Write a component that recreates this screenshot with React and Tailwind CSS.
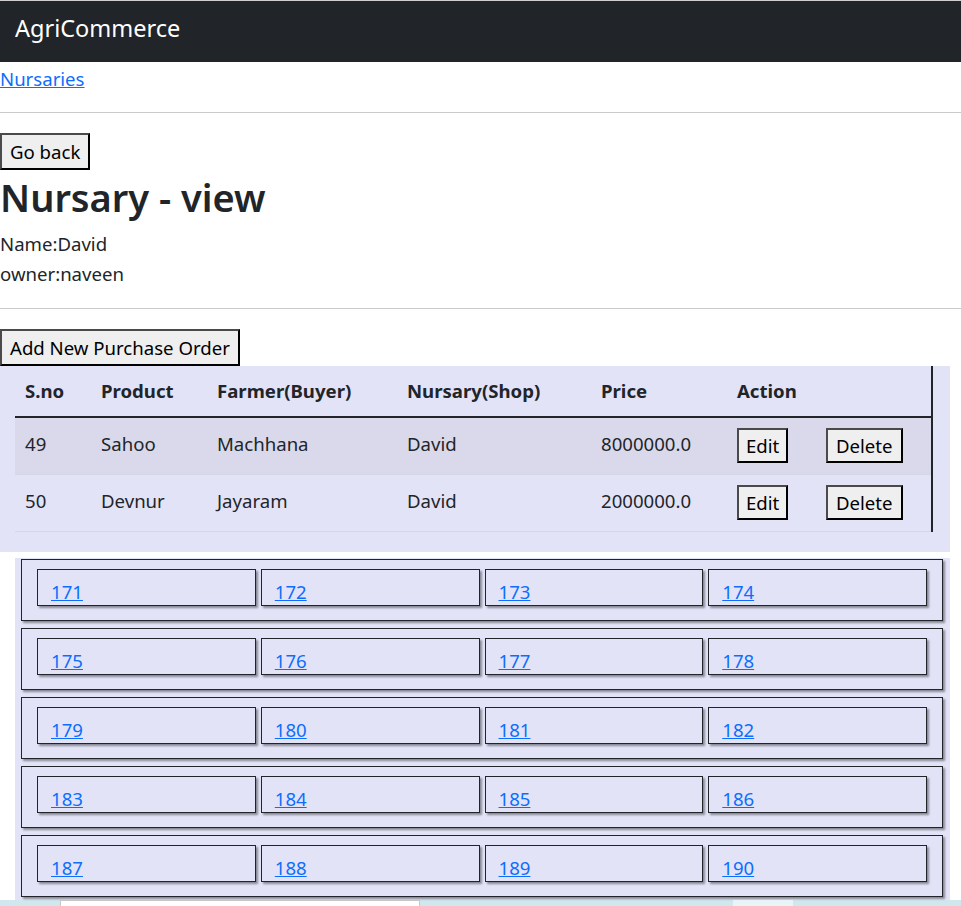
const orders = [
  { sno: 49, product: 'Sahoo', farmer: 'Machhana', nursary: 'David', price: '8000000.0' },
  { sno: 50, product: 'Devnur', farmer: 'Jayaram', nursary: 'David', price: '2000000.0' },
];

const pageRows = [
  [171, 172, 173, 174],
  [175, 176, 177, 178],
  [179, 180, 181, 182],
  [183, 184, 185, 186],
  [187, 188, 189, 190],
];

const btn =
  'bg-[#efefef] border-2 border-solid border-[#4a4a4a] border-r-black border-b-black text-black leading-none';

export default function App() {
  return (
    <div className="min-h-[906px] bg-white text-[#212529] text-[18.6px] font-['Noto_Sans',sans-serif]">
      {/* Navbar */}
      <nav className="h-[62px] bg-[#212529] border-t border-[#cfcfcf] flex items-center pl-[15px] pb-[6px]">
        <span className="text-white text-[23.5px]">AgriCommerce</span>
      </nav>

      <a href="#" className="block mt-[2px] w-fit text-[#0d6efd] underline leading-[29px]">
        Nursaries
      </a>
      <hr className="mt-[19px] border-0 border-t border-[#c9cacb]" />

      <button className={`${btn} mt-[20px] h-[37px] px-[8px] pt-[1px]`}>Go back</button>
      <h1 className="text-[38px] font-semibold leading-[48px] mt-[3px]">Nursary - view</h1>
      <div className="mt-[8px] leading-[30px]">
        <p>Name:David</p>
        <p>owner:naveen</p>
      </div>
      <hr className="mt-[19px] border-0 border-t border-[#c9cacb]" />

      <button className={`${btn} mt-[20px] h-[37px] px-[8px] pt-[1px]`}>Add New Purchase Order</button>

      {/* Orders table */}
      <div className="w-[950px] bg-[#e3e3f8] pl-[15px] pb-[20px]">
        <table className="w-[918px] border-r-2 border-[#212529] border-collapse text-left">
          <thead>
            <tr className="h-[51px] border-b-2 border-[#212529]">
              <th className="w-[76px] pl-[10px] font-bold">S.no</th>
              <th className="w-[116px] pl-[10px] font-bold">Product</th>
              <th className="w-[190px] pl-[10px] font-bold">Farmer(Buyer)</th>
              <th className="w-[194px] pl-[10px] font-bold">Nursary(Shop)</th>
              <th className="w-[136px] pl-[10px] font-bold">Price</th>
              <th className="w-[89px] pl-[10px] font-bold">Action</th>
              <th className="pl-[10px]"></th>
            </tr>
          </thead>
          <tbody>
            {orders.map((o, i) => (
              <tr
                key={o.sno}
                className={`h-[57px] border-b border-[#d6d6e6] ${i % 2 === 0 ? 'bg-[#d9d9eb]' : ''}`}
              >
                <td className="pl-[10px] pb-[3px]">{o.sno}</td>
                <td className="pl-[10px] pb-[3px]">{o.product}</td>
                <td className="pl-[10px] pb-[3px]">{o.farmer}</td>
                <td className="pl-[10px] pb-[3px]">{o.nursary}</td>
                <td className="pl-[10px] pb-[3px]">{o.price}</td>
                <td className="pl-[10px]">
                  <button className={`${btn} h-[35px] px-[7px] pt-[2px]`}>Edit</button>
                </td>
                <td className="pl-[10px]">
                  <button className={`${btn} h-[35px] px-[8px] pt-[2px]`}>Delete</button>
                </td>
              </tr>
            ))}
          </tbody>
        </table>
      </div>

      {/* Page links */}
      <div className="ml-[15px] mt-[6px] w-[935px] bg-[#e3e3f8] pl-[6px] pr-[7px] pt-[1px] pb-[3px] flex flex-col gap-[7px]">
        {pageRows.map((row) => (
          <div
            key={row[0]}
            className="h-[62px] border border-[#212529] shadow-[2px_2px_2px_rgba(0,0,0,0.4)] pt-[9px] px-[15px] flex gap-[5px]"
          >
            {row.map((n) => (
              <div
                key={n}
                className="w-[219px] h-[37px] border border-[#212529] shadow-[2px_2px_2px_rgba(0,0,0,0.4)] pl-[13px] pt-[9px] leading-[26px]"
              >
                <a href="#" className="text-[#0d6efd] underline">
                  {n}
                </a>
              </div>
            ))}
          </div>
        ))}
      </div>

      {/* Cut-off strip at the bottom */}
      <div className="h-[6px] bg-[#d0e7ee] flex">
        <div className="ml-[60px] w-[360px] bg-white border-t border-l border-r border-[#c8c8c8]"></div>
        <div className="ml-[313px] w-[60px] bg-[#e9f4f7]"></div>
      </div>
    </div>
  );
}
